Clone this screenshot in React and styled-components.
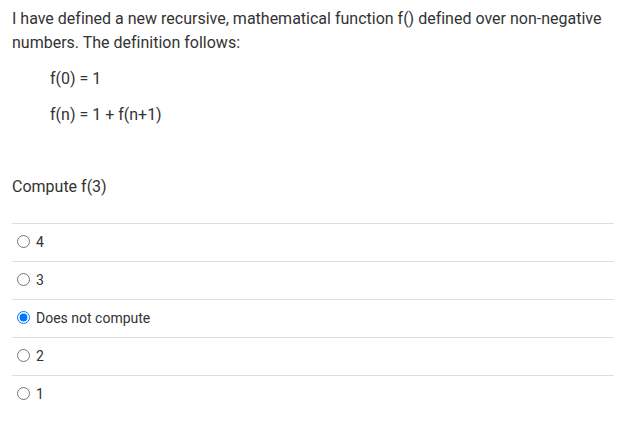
import styled, { createGlobalStyle } from "styled-components"

const Global = createGlobalStyle`
  body {
    margin: 0;
    background: #fff;
    font-family: Roboto, "Liberation Sans", sans-serif;
    font-variant-ligatures: none;
    color: #333;
  }
`

const Page = styled.div`
  padding: 7px 16px 0 12px;
`

const Intro = styled.p`
  margin: 0;
  font-size: 16px;
  line-height: 24px;
`

const Formulas = styled.div`
  padding: 12px 0 0 38px;
  display: flex;
  flex-direction: column;
  gap: 12px;
`

const Formula = styled.div`
  font-size: 16px;
  line-height: 24px;
`

const Question = styled.div`
  margin-top: 48px;
  font-size: 16px;
  line-height: 24px;
`

const Options = styled.div`
  margin-top: 24px;
`

const Option = styled.label`
  box-sizing: border-box;
  display: flex;
  align-items: center;
  height: 38px;
  padding-bottom: 2px;
  border-top: 1px solid #dedede;
  font-size: 14px;
  cursor: pointer;

  input {
    margin: 0 6px 0 5px;
    width: 13px;
    height: 13px;
  }
`

const choices = ["4", "3", "Does not compute", "2", "1"]

export default function App() {
  return (
    <Page>
      <Global />
      <Intro>
        I have defined a new recursive, mathematical function f() defined over non-negative
        numbers. The definition follows:
      </Intro>
      <Formulas>
        <Formula>f(0) = 1</Formula>
        <Formula>f(n) = 1 + f(n+1)</Formula>
      </Formulas>
      <Question>Compute f(3)</Question>
      <Options>
        {choices.map((c) => (
          <Option key={c}>
            <input type="radio" name="answer" defaultChecked={c === "Does not compute"} />
            {c}
          </Option>
        ))}
      </Options>
    </Page>
  )
}
